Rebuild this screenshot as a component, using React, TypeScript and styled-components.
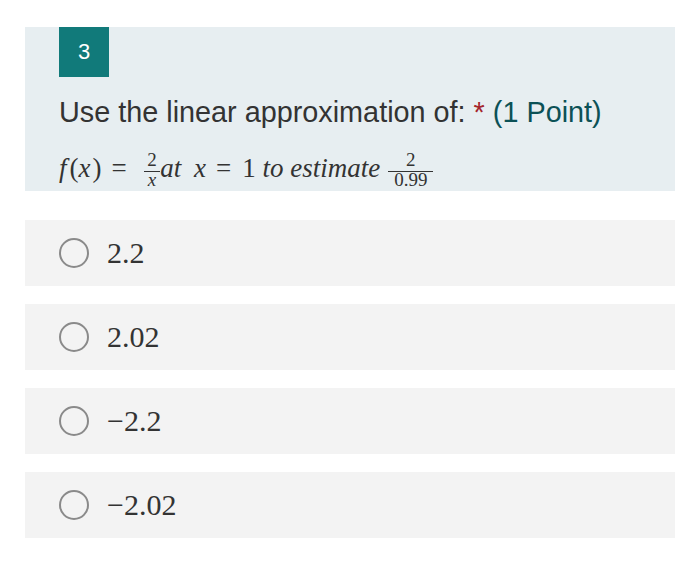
import styled, { createGlobalStyle } from "styled-components";

const GlobalStyle = createGlobalStyle`
  body {
    margin: 0;
    background: #ffffff;
  }
`;

const Page = styled.div`
  width: 650px;
  padding: 27px 0 0 25px;
  display: flex;
  flex-direction: column;
  gap: 18px;
`;

const QuestionPanel = styled.div`
  background: #e7eef1;
  padding: 0 0 0 34px;
  display: flex;
  flex-direction: column;
  margin-bottom: 11px;
`;

const Badge = styled.div`
  width: 50px;
  height: 50px;
  flex-shrink: 0;
  background: #117a7a;
  color: #ffffff;
  font-family: "Liberation Sans", Arial, sans-serif;
  font-size: 22px;
  display: flex;
  align-items: center;
  justify-content: center;
`;

const Title = styled.div`
  margin-top: 19px;
  font-family: "Liberation Sans", Arial, sans-serif;
  font-size: 28.8px;
  line-height: 32px;
  color: #333333;
  white-space: nowrap;
`;

const Required = styled.span`
  color: #a4262c;
`;

const Points = styled.span`
  color: #0c5156;
`;

const MathLine = styled.div`
  margin-top: 22px;
  height: 41px;
  font-family: "Liberation Serif", "Times New Roman", serif;
  font-style: italic;
  font-size: 27px;
  line-height: 36px;
  color: #333333;
  white-space: nowrap;
`;

const Upright = styled.span<{ $r?: number }>`
  font-style: normal;
  margin-right: ${(p) => p.$r ?? 0}px;
`;

const Var = styled.span<{ $r?: number }>`
  margin-right: ${(p) => p.$r ?? 0}px;
`;

const Op = styled.span<{ $l: number; $r: number }>`
  font-style: normal;
  margin-left: ${(p) => p.$l}px;
  margin-right: ${(p) => p.$r}px;
`;

const Frac = styled.span<{ $l?: number }>`
  display: inline-flex;
  flex-direction: column;
  align-items: center;
  vertical-align: 11px;
  font-size: 19px;
  line-height: 16px;
  margin-left: ${(p) => p.$l ?? 0}px;
`;

const Num = styled.span`
  font-style: normal;
  align-self: stretch;
  text-align: center;
  padding-bottom: 3px;
  border-bottom: 1px solid #333333;
`;

const Den = styled.span<{ $italic?: boolean; $pad: number }>`
  font-style: ${(p) => (p.$italic ? "italic" : "normal")};
  padding: 0 ${(p) => p.$pad}px;
`;

const Option = styled.label`
  height: 66px;
  background: #f3f3f3;
  display: flex;
  align-items: center;
  padding-left: 34px;
  gap: 18px;
  font-family: "Liberation Serif", "Times New Roman", serif;
  font-size: 30px;
  color: #333333;
`;

const Radio = styled.span`
  width: 26px;
  height: 26px;
  border: 2px solid #8a8a8a;
  border-radius: 50%;
  flex-shrink: 0;
`;

const options = ["2.2", "2.02", "\u22122.2", "\u22122.02"];

function App() {
  return (
    <>
      <GlobalStyle />
      <Page>
        <QuestionPanel>
          <Badge>3</Badge>
          <Title>
            Use the linear approximation of: <Required>*</Required>{" "}
            <Points>(1 Point)</Points>
          </Title>
          <MathLine>
            <Var $r={3}>f</Var>
            <Upright>(</Upright>
            <Var $r={2}>x</Var>
            <Upright>)</Upright>
            <Op $l={10} $r={17}>=</Op>
            <Frac>
              <Num>2</Num>
              <Den $italic $pad={4}>x</Den>
            </Frac>
            <Var $r={6}>at</Var> x<Op $l={10} $r={11}>=</Op>
            <Upright>1</Upright> to estimate
            <Frac $l={8}>
              <Num>2</Num>
              <Den $pad={6}>0.99</Den>
            </Frac>
          </MathLine>
        </QuestionPanel>
        {options.map((o) => (
          <Option key={o}>
            <Radio />
            {o}
          </Option>
        ))}
      </Page>
    </>
  );
}

export default App;
